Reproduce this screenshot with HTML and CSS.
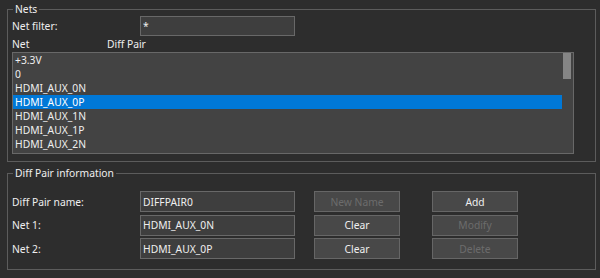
FILE: index.html
```html
<!DOCTYPE html>
<html lang="en">
<head>
  <meta charset="UTF-8" />
  <title>Diff Pairs</title>
  <link rel="stylesheet" href="styles.css">
</head>
<body>
  <fieldset class="group nets">
    <legend>Nets</legend>
    <div class="row">
      <label class="label">Net filter:</label>
      <input class="field" type="text" value="*">
    </div>
    <div class="list-head">
      <span class="col-net">Net</span>
      <span>Diff Pair</span>
    </div>
    <div class="listbox">
      <ul class="items">
        <li>+3.3V</li>
        <li>0</li>
        <li>HDMI_AUX_0N</li>
        <li class="selected">HDMI_AUX_0P</li>
        <li>HDMI_AUX_1N</li>
        <li>HDMI_AUX_1P</li>
        <li>HDMI_AUX_2N</li>
      </ul>
      <div class="scrollbar"><div class="thumb"></div></div>
    </div>
  </fieldset>

  <fieldset class="group info">
    <legend>Diff Pair information</legend>
    <div class="form">
      <label class="label">Diff Pair name:</label>
      <input class="field" type="text" value="DIFFPAIR0">
      <button class="btn" disabled>New Name</button>
      <button class="btn">Add</button>

      <label class="label">Net 1:</label>
      <input class="field" type="text" value="HDMI_AUX_0N">
      <button class="btn">Clear</button>
      <button class="btn" disabled>Modify</button>

      <label class="label">Net 2:</label>
      <input class="field" type="text" value="HDMI_AUX_0P">
      <button class="btn">Clear</button>
      <button class="btn" disabled>Delete</button>
    </div>
  </fieldset>
</body>
</html>
```

FILE: styles.css
```css
:root {
  --bg: #2d2d2d;
  --group-line: #5c5c5c;
  --text: #efefef;
  --dim: #6c6c6c;
  --field-bg: #3e3e3e;
  --field-line: #686868;
  --list-bg: #434343;
  --select: #0078d7;
}

* {
  margin: 0;
  padding: 0;
  box-sizing: border-box;
}

body {
  background: var(--bg);
  color: var(--text);
  font-family: 'Noto Sans', sans-serif;
  font-size: 10.3px;
  line-height: 14px;
  width: 600px;
  height: 278px;
  overflow: hidden;
  padding: 0 5px 0 7px;
}

.group {
  border: 1px solid var(--group-line);
  width: 589px;
  padding: 0 4px;
  min-width: 0;
}

.group legend {
  padding: 0 2px;
  margin-left: 1px;
  line-height: 14px;
}

.nets {
  margin-top: 2px;
  height: 160px;
}

.info {
  margin-top: 4px;
  height: 104px;
  padding-top: 11px;
}

.row {
  display: flex;
  align-items: center;
  height: 20px;
}

.label {
  width: 128px;
}

.field {
  width: 155px;
  height: 20px;
  background: var(--field-bg);
  border: 1px solid var(--field-line);
  color: var(--text);
  font: inherit;
  padding: 0 2px;
  outline: none;
}

.list-head {
  display: flex;
  height: 16px;
  padding-top: 1px;
}

.col-net {
  width: 95px;
}

.listbox {
  display: flex;
  width: 562px;
  height: 102px;
  background: var(--list-bg);
  border: 1px solid var(--field-line);
}

.items {
  list-style: none;
  flex: 1;
}

.items li {
  height: 14px;
  padding-left: 2px;
}

.items .selected {
  background: var(--select);
  color: #fff;
}

.scrollbar {
  width: 11px;
  padding: 0 1px;
}

.thumb {
  width: 8px;
  height: 26px;
  background: #858585;
}

.form {
  display: grid;
  grid-template-columns: 128px 155px 105px 118px;
  row-gap: 2.5px;
  align-items: center;
}

.form .field {
  height: 21px;
}

.btn {
  justify-self: end;
  width: 86px;
  height: 21px;
  background: #484848;
  border: 1px solid #666;
  color: var(--text);
  font: inherit;
}

.btn:disabled {
  color: var(--dim);
}
```
